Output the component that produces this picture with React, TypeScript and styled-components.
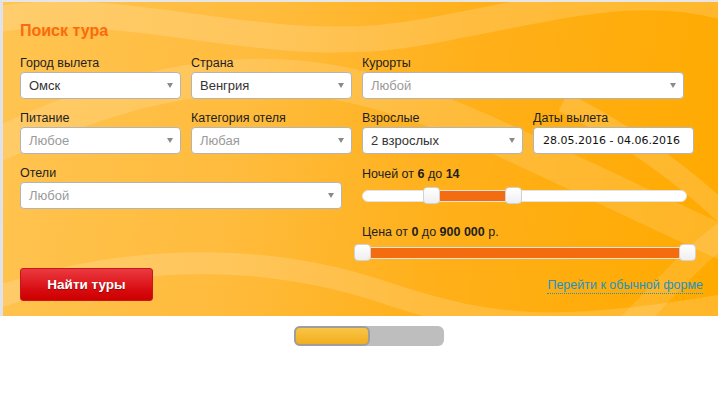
import styled, { createGlobalStyle } from "styled-components";

const GlobalStyle = createGlobalStyle`
  html, body {
    margin: 0;
    padding: 0;
    background: #fff;
  }
  body {
    font-family: "Liberation Sans", Arial, sans-serif;
    font-size: 12.5px;
    color: #222;
  }
`;

type Option = { label: string; value: string; placeholder?: boolean };

function Select({ label, value, placeholder, wide }: Option & { wide?: boolean }) {
  return (
    <Field wide={wide}>
      <Label>{label}</Label>
      <SelectBox wide={wide}>
        <SelectText muted={placeholder}>{value}</SelectText>
        <Arrow />
      </SelectBox>
    </Field>
  );
}

type SliderProps = {
  width: number;
  trackLeft: number;
  trackRight: number;
  from: number;
  to: number;
};

function RangeSlider({ width, trackLeft, trackRight, from, to }: SliderProps) {
  return (
    <SliderBody style={{ width }}>
      <Track style={{ left: trackLeft, right: trackRight }} />
      <Fill style={{ left: from + 17, width: to - from - 17 }} />
      <Handle style={{ left: from }} />
      <Handle style={{ left: to }} />
    </SliderBody>
  );
}

export default function App() {
  return (
    <>
      <GlobalStyle />
      <Panel>
        <Waves viewBox="0 0 715 314" preserveAspectRatio="none">
          <path d="M-20 20 C 120 -10, 260 60, 420 30 S 640 -20, 740 10" stroke="#fff" strokeOpacity="0.16" strokeWidth="26" fill="none" />
          <path d="M-20 150 C 100 90, 220 60, 330 80 S 520 150, 740 250" stroke="#fff" strokeOpacity="0.14" strokeWidth="34" fill="none" />
          <path d="M-20 300 C 120 250, 260 250, 380 290 S 560 330, 740 300" stroke="#fff" strokeOpacity="0.16" strokeWidth="22" fill="none" />
          <path d="M560 100 C 620 130, 680 170, 740 230" stroke="#fff" strokeOpacity="0.16" strokeWidth="20" fill="none" />
          <path d="M620 330 C 660 290, 700 240, 740 220" stroke="#fff" strokeOpacity="0.12" strokeWidth="24" fill="none" />
        </Waves>
        <Content>
          <Title>Поиск тура</Title>
          <Grid>
            <Select label="Город вылета" value="Омск" />
            <Select label="Страна" value="Венгрия" />
            <Select label="Курорты" value="Любой" placeholder wide />

            <Select label="Питание" value="Любое" placeholder />
            <Select label="Категория отеля" value="Любая" placeholder />
            <Select label="Взрослые" value="2 взрослых" />
            <Field>
              <Label>Даты вылета</Label>
              <DateBox>28.05.2016 - 04.06.2016</DateBox>
            </Field>

            <Select label="Отели" value="Любой" placeholder wide />
            <Sliders>
              <Label>
                Ночей от <b>6</b> до <b>14</b>
              </Label>
              <RangeSlider width={325} trackLeft={0} trackRight={0} from={61} to={143} />
              <PriceLabel>
                Цена от <b>0</b> до <b>900 000</b> р.
              </PriceLabel>
              <PriceSlider>
                <RangeSlider width={342} trackLeft={1} trackRight={1} from={0} to={325} />
              </PriceSlider>
            </Sliders>
          </Grid>
          <Bottom>
            <SearchButton>Найти туры</SearchButton>
            <SwitchLink>Перейти к обычной форме</SwitchLink>
          </Bottom>
        </Content>
      </Panel>
      <Pager>
        <PagerTrack>
          <PagerThumb />
        </PagerTrack>
      </Pager>
    </>
  );
}

const Panel = styled.div`
  position: relative;
  width: 715px;
  height: 314px;
  border-left: 3px solid #dfe3e9;
  border-top: 2px solid #e6e6e6;
  overflow: hidden;
  background: linear-gradient(100deg, #ffc451 0%, #ffbb3c 35%, #ffb01a 62%, #ffaa00 100%);
`;

const Waves = styled.svg`
  position: absolute;
  inset: 0;
  width: 100%;
  height: 100%;
`;

const Content = styled.div`
  position: relative;
  padding: 18px 0 0 17px;
`;

const Title = styled.h1`
  margin: 0 0 13px;
  font-size: 16px;
  line-height: 22px;
  font-weight: bold;
  color: #fb6a10;
`;

const Grid = styled.div`
  display: grid;
  grid-template-columns: repeat(4, 161px);
  column-gap: 10px;
  row-gap: 11px;
  align-items: start;
`;

const Field = styled.div<{ wide?: boolean }>`
  display: flex;
  flex-direction: column;
  grid-column: ${({ wide }) => (wide ? "span 2" : "span 1")};
`;

const Label = styled.div`
  height: 16px;
  line-height: 16px;
  margin-bottom: 1px;
  color: #1e1e1e;
  white-space: nowrap;

  b {
    font-weight: bold;
  }
`;

const SelectBox = styled.div<{ wide?: boolean }>`
  display: flex;
  align-items: center;
  justify-content: space-between;
  box-sizing: border-box;
  width: ${({ wide }) => (wide ? "322px" : "161px")};
  height: 27px;
  padding: 0 7px 0 8px;
  background: #fff;
  border: 1px solid #b4b4b4;
  border-radius: 4px;
`;

const SelectText = styled.span<{ muted?: boolean }>`
  font-size: 13px;
  color: ${({ muted }) => (muted ? "#9a9a9a" : "#333")};
`;

const Arrow = styled.span`
  width: 0;
  height: 0;
  border-left: 3.5px solid transparent;
  border-right: 3.5px solid transparent;
  border-top: 5px solid #8a8a8a;
`;

const DateBox = styled.div`
  box-sizing: border-box;
  width: 161px;
  height: 27px;
  padding-left: 9px;
  line-height: 25px;
  background: #fff;
  border: 1px solid #b4b4b4;
  border-radius: 4px;
  font-family: "DejaVu Sans", Tahoma, sans-serif;
  font-size: 11px;
  color: #111;
  white-space: nowrap;
`;

const Sliders = styled.div`
  grid-column: span 2;
  display: flex;
  flex-direction: column;
  margin-top: 1px;
`;

const PriceLabel = styled(Label)`
  margin-top: 20px;
  margin-bottom: 0;
`;

const PriceSlider = styled.div`
  margin-left: -8px;
`;

const SliderBody = styled.div`
  position: relative;
  height: 17px;
  margin-top: 4px;
`;

const Track = styled.div`
  position: absolute;
  top: 3px;
  height: 12px;
  box-sizing: border-box;
  background: #fff;
  border: 1px solid #e3e3e3;
  border-radius: 6px;
`;

const Fill = styled.div`
  position: absolute;
  top: 4px;
  height: 10px;
  background: #f46c10;
`;

const Handle = styled.div`
  position: absolute;
  top: 0;
  width: 17px;
  height: 17px;
  box-sizing: border-box;
  background: linear-gradient(#ffffff, #efefef);
  border: 1px solid #d2d2d2;
  border-radius: 4px;
`;

const Bottom = styled.div`
  display: flex;
  justify-content: space-between;
  align-items: center;
  width: 683px;
  margin-top: 7px;
`;

const SearchButton = styled.button`
  width: 133px;
  height: 33px;
  padding: 0;
  border: 1px solid #c8161c;
  border-radius: 3px;
  background: linear-gradient(#ea3a40, #d70a0f 70%, #cc0000);
  color: #fff;
  font-family: "Liberation Sans", Arial, sans-serif;
  font-size: 13.5px;
  font-weight: bold;
  text-shadow: 0 1px 1px rgba(90, 0, 0, 0.6);
  cursor: pointer;
`;

const SwitchLink = styled.a`
  margin-top: 3px;
  font-size: 12.5px;
  color: #1c93c4;
  text-decoration: none;
  border-bottom: 1px dotted #1c93c4;
  line-height: 15px;
  cursor: pointer;
`;

const Pager = styled.div`
  display: flex;
  justify-content: center;
  padding: 10px 0 0 12px;
`;

const PagerTrack = styled.div`
  width: 150px;
  height: 20px;
  background: #bebebe;
  border-radius: 6px;
  display: flex;
  align-items: center;
`;

const PagerThumb = styled.div`
  box-sizing: border-box;
  width: 76px;
  height: 20px;
  border: 2px solid #9e9e9e;
  border-radius: 6px;
  background: linear-gradient(#f8c547, #f2ae1e);
`;
